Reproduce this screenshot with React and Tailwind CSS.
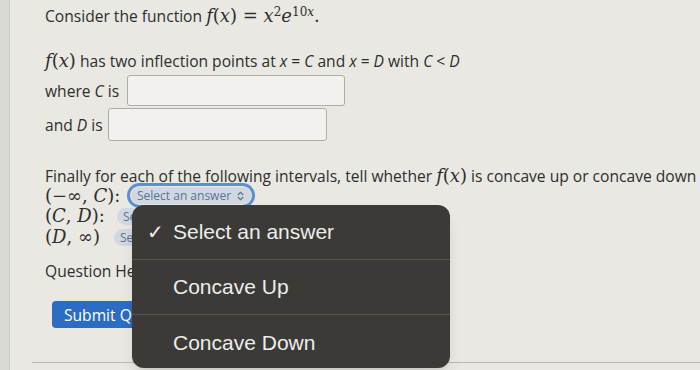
const sans = { fontFamily: '"Open Sans", "DejaVu Sans", sans-serif' };

const M = ({ children, className = "" }) => (
  <span className={`font-['DejaVu_Serif',serif] leading-[18px] ${className}`}>{children}</span>
);

const Fx = () => (
  <M className="text-[18px]">
    <i>f</i>(<i>x</i>)
  </M>
);

const UpDown = () => (
  <svg width="9" height="10" viewBox="0 0 9 10" className="ml-[5px]">
    <path d="M1.8 4 L4.5 1.3 L7.2 4" fill="none" stroke="#5574a0" strokeWidth="1.3" />
    <path d="M1.8 6 L4.5 8.7 L7.2 6" fill="none" stroke="#5574a0" strokeWidth="1.3" />
  </svg>
);

const Pill = ({ focused }) => (
  <div
    className={
      focused
        ? "rounded-full border-[3px] border-[#5b8fcf] p-[1px]"
        : "rounded-full"
    }
  >
    <div className="flex h-[17px] items-center whitespace-nowrap rounded-full bg-[#d3d8df] px-[6px] text-[12px] leading-[17px] text-[#5574a0]">
      Select an answer
      <UpDown />
    </div>
  </div>
);

const Option = ({ checked, label, last }) => (
  <div
    className={`flex h-[55px] items-center ${last ? "" : "border-b border-[#55544f]"}`}
  >
    <span className="w-[41px] pl-[15px] text-[20px] text-[#ededeb]">{checked ? "✓" : ""}</span>
    <span className="text-[21px] text-[#ededeb]">{label}</span>
  </div>
);

export default function App() {
  return (
    <div
      className="relative flex h-[370px] w-[700px] overflow-hidden bg-[#e9e8e3] text-[15.6px] leading-[18px] text-[#2e2e2e]"
      style={sans}
    >
      <div className="w-[10px] shrink-0 border-r border-[#c9c9c6] bg-[#d9d9d6]" />

      <div className="flex flex-1 flex-col pl-[35px] pt-[4px]">
        <div className="flex h-[24px] items-center whitespace-nowrap">
          Consider the function&nbsp;
          <M className="text-[18px]">
            <i>f</i>(<i>x</i>) = <i>x</i>
            <sup className="text-[12px]">2</sup>
            <i>e</i>
            <sup className="text-[12px]">
              10<i>x</i>
            </sup>
            .
          </M>
        </div>

        <div className="mt-[21px] flex h-[24px] items-center whitespace-nowrap">
          <Fx />
          &nbsp;has two inflection points at <i className="mx-[4px]">x</i>= <i className="mx-[4px]">C</i> and
          <i className="mx-[4px]">x</i>= <i className="mx-[4px]">D</i> with <i className="mx-[4px]">C</i>
          &lt; <i className="ml-[4px]">D</i>
        </div>

        <div className="mt-[2px] flex h-[31px] items-center">
          <span className="w-[82px]">
            where <i>C</i> is
          </span>
          <div className="h-[31px] w-[218px] rounded-[3px] border border-[#adacaa] bg-[#f2f1ed]" />
        </div>

        <div className="mt-[2px] flex h-[33px] items-center">
          <span className="w-[63px]">
            and <i>D</i> is
          </span>
          <div className="h-[33px] w-[219px] rounded-[3px] border border-[#adacaa] bg-[#f2f1ed]" />
        </div>

        <div className="mt-[26px] flex h-[18px] items-center whitespace-nowrap">
          Finally for each of the following intervals, tell whether&nbsp;
          <Fx />
          &nbsp;is concave up or concave down
        </div>

        <div className="flex h-[21px] items-center">
          <M className="w-[82px] text-[18px]">
            (−∞, <i>C</i>):
          </M>
          <Pill focused />
        </div>

        <div className="flex h-[20px] items-center">
          <M className="w-[72px] text-[18px]">
            (<i>C</i>, <i>D</i>):
          </M>
          <Pill />
        </div>

        <div className="mt-[1px] flex h-[20px] items-center">
          <M className="w-[69px] text-[18px]">
            (<i>D</i>, ∞)
          </M>
          <Pill />
        </div>

        <div className="mt-[14px] flex h-[20px] items-center">Question Help:</div>

        <div className="mt-[20px] pl-[7px]">
          <button className="h-[27px] rounded-[4px] bg-[#2c6cc4] px-[12px] text-[15.6px] text-white">
            Submit Question
          </button>
        </div>

        <div className="ml-[-13px] mt-[34px] border-t border-[#b9b8b4]" />
      </div>

      <div className="absolute left-[132px] top-[205px] h-[163px] w-[318px] overflow-hidden rounded-[12px] bg-[#3b3a37] font-['Liberation_Sans',sans-serif] shadow-lg">
        <Option checked label="Select an answer" />
        <Option label="Concave Up" />
        <Option label="Concave Down" last />
      </div>
    </div>
  );
}
